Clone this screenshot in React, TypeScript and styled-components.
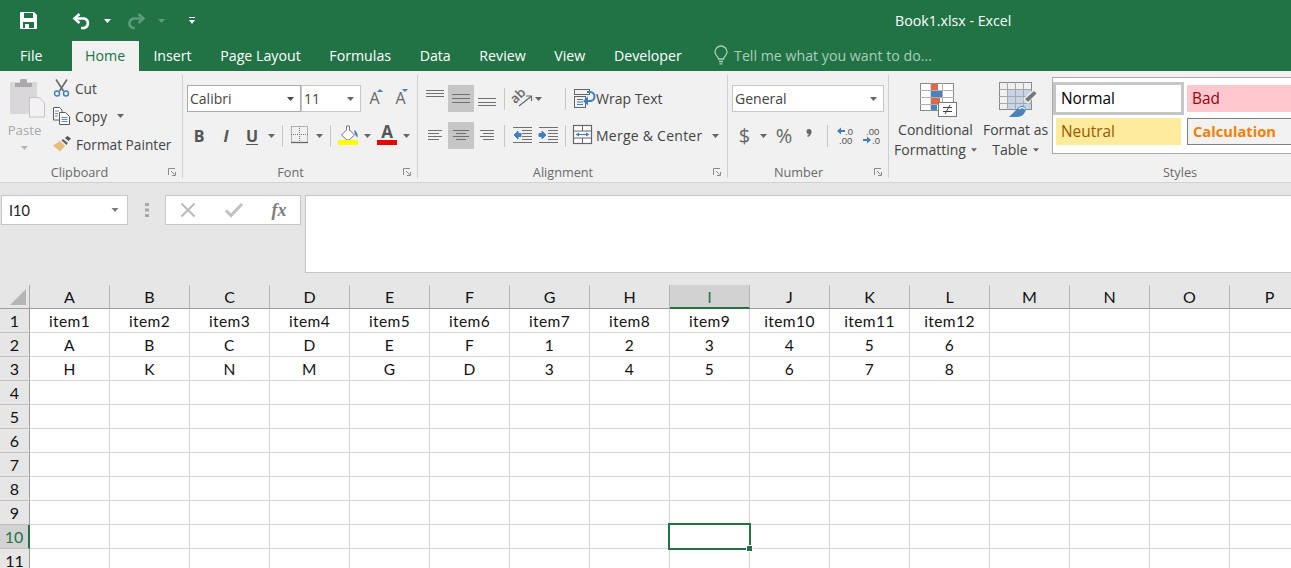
import React from 'react';
import styled, { createGlobalStyle } from 'styled-components';

const UI = `"Open Sans", "Noto Sans", "Liberation Sans", sans-serif`;
const SHEET = `Lato, "Noto Sans", "Liberation Sans", sans-serif`;
const GREEN = '#217346';
const BLUE = '#3f7fbf';

const Global = createGlobalStyle`
  html, body { margin: 0; padding: 0; background: #fff; }
  * { box-sizing: border-box; }
  svg { display: block; flex: none; overflow: visible; }
`;

const Page = styled.div`
  width: 1291px; height: 568px; overflow: hidden;
  font-family: ${UI}; display: flex; flex-direction: column;
`;
const TitleBar = styled.header`
  height: 41px; background: ${GREEN}; display: flex; align-items: center;
  padding-left: 20px; color: #fff;
`;
const QuickSlot = styled.span<{ $w: number }>`
  width: ${p => p.$w}px; display: flex; align-items: center;
`;
const DocTitle = styled.div`
  margin-left: 700px; font-size: 14.2px; white-space: nowrap;
`;
const TabBar = styled.nav`
  height: 30px; background: ${GREEN}; display: flex; padding-left: 5px;
`;
const Tab = styled.div<{ $active?: boolean }>`
  height: 30px; padding: ${p => (p.$active ? '0 14px 2px 13px' : '0 14.3px 2px')};
  display: flex; align-items: center; font-size: 14.2px; white-space: nowrap;
  color: ${p => (p.$active ? GREEN : '#fff')};
  background: ${p => (p.$active ? '#f1f1f1' : 'transparent')};
`;
const FileTab = styled(Tab)`
  padding: 0 0 2px 15px; width: 53px; margin-right: 14px;
`;
const TellMe = styled.div`
  margin-left: 18px; padding-bottom: 2px; display: flex; align-items: center; gap: 6px;
  color: #a9cdb9; font-size: 14.2px; white-space: nowrap;
`;
const Ribbon = styled.section`
  height: 112px; background: #f1f1f1; border-bottom: 1px solid #d2d2d2; display: flex;
`;
const Group = styled.div<{ $w: number; $last?: boolean }>`
  width: ${p => p.$w}px; flex: none; height: 111px; position: relative;
  display: flex; flex-direction: column; overflow: ${p => (p.$last ? 'hidden' : 'visible')};
  ${p => (p.$last ? '' : `
    &::after { content: ''; position: absolute; right: 0; top: 4px; height: 103px; width: 1px; background: #cfcfcf; }
  `)}
`;
const GroupBody = styled.div`
  height: 90px; flex: none; display: flex;
`;
const RowsBody = styled.div`
  height: 90px; flex: none; display: flex; flex-direction: column;
  padding-top: 14px; gap: 10px;
`;
const GroupLabel = styled.div<{ $pl?: number; $pr?: number }>`
  height: 21px; display: flex; align-items: center; justify-content: center;
  padding: 0 ${p => p.$pr ?? 20}px 0 ${p => p.$pl ?? 0}px;
  font-size: 12.7px; color: #6a6a6a; position: relative;
`;
const Launcher = styled.span`
  position: absolute; right: 7px; top: 7px;
`;
const ToolRow = styled.div<{ $pl?: number }>`
  height: 27px; display: flex; align-items: center; padding-left: ${p => p.$pl ?? 0}px;
`;
const Slot = styled.span<{ $w: number; $on?: boolean; $ml?: number }>`
  width: ${p => p.$w}px; height: 27px; flex: none; display: flex; align-items: center; justify-content: center;
  margin-left: ${p => p.$ml ?? 0}px; position: relative;
  background: ${p => (p.$on ? '#c6c6c6' : 'transparent')};
`;
const Divider = styled.span<{ $ml?: number; $mr?: number }>`
  width: 1px; height: 22px; background: #c6c6c6; flex: none;
  margin: 0 ${p => p.$mr ?? 0}px 0 ${p => p.$ml ?? 0}px;
`;
const PasteCol = styled.div`
  width: 48px; flex: none; display: flex; flex-direction: column; align-items: center; padding: 8px 0 0 1px;
  color: #a6a6a6; font-size: 13.2px;
`;
const PasteArt = styled.span`
  margin-left: 5px;
`;
const PasteText = styled.span`
  margin-top: 3px; line-height: 20px; margin-bottom: 6px;
`;
const ClipCol = styled.div`
  padding: 3px 0 0 5px; display: flex; flex-direction: column;
`;
const ClipRow = styled.div`
  height: 28px; display: flex; align-items: center; gap: 5px; font-size: 13.7px; color: #444; white-space: nowrap;
`;
const Select = styled.div<{ $w: number; $border?: string }>`
  width: ${p => p.$w}px; height: 27px; flex: none; background: #fff;
  border: 1px solid ${p => p.$border ?? '#ababab'}; display: flex; align-items: center; justify-content: space-between;
  padding: 0 6px 0 2px; font-size: 14px; color: #444;
`;
const GrowText = styled.span`
  font-size: 16px; color: #666; line-height: 27px;
`;
const GrowMark = styled.span<{ $left: number }>`
  position: absolute; top: 4px; left: ${p => p.$left}px;
`;
const LabelText = styled.span<{ $ml: number; $ls?: number }>`
  margin-left: ${p => p.$ml}px; font-size: 14px; color: #444; white-space: nowrap;
  letter-spacing: ${p => p.$ls ?? 0}px;
`;
const Big = styled.div<{ $w: number }>`
  width: ${p => p.$w}px; flex: none; display: flex; flex-direction: column; align-items: center;
  padding-top: 11px; font-size: 14px; line-height: 20px; color: #444; text-align: center; white-space: nowrap;
`;
const BigLines = styled.div`
  margin-top: 2px; display: flex; flex-direction: column; align-items: center;
`;
const BigLine = styled.span`
  display: flex; align-items: center; gap: 5px;
`;
const Gallery = styled.div`
  flex: 1; margin: 6px 0 0 3px; height: 77px; background: #fff; border: 1px solid #ababab; border-right: 0;
  display: grid; grid-template-columns: 125px 120px; grid-template-rows: 27px 27px;
  column-gap: 6px; row-gap: 6px; padding: 7px 0 0 3px;
`;
const StyleCell = styled.div<{ $bg: string; $fg: string; $bold?: boolean; $box?: boolean; $sel?: boolean }>`
  background: ${p => p.$bg}; color: ${p => p.$fg}; font-weight: ${p => (p.$bold ? 700 : 400)};
  font-size: ${p => (p.$bold ? 14.7 : 15.4)}px; padding: 0 0 ${p => (p.$box ? 2 : 0)}px 5px;
  border: ${p => (p.$box ? '1px solid #7f7f7f' : 'none')};
  display: flex; align-items: center;
  ${p => (p.$sel ? 'outline: 3px solid #c6c6c6;' : '')}
`;
const BoldB = styled.span`font-weight: 700; font-size: 16px; color: #555;`;
const ItalicI = styled.span`font-weight: 700; font-style: italic; font-size: 16px; color: #555;`;
const UnderU = styled.span`font-weight: 700; font-size: 16px; color: #555; text-decoration: underline; text-underline-offset: 2px;`;
const DollarText = styled.span`font-size: 20px; color: #666;`;
const PercentText = styled.span`font-size: 20px; color: #666;`;
const FormulaArea = styled.section`
  height: 102px; background: #e6e6e6; display: flex; align-items: flex-start;
  padding: 12px 0 0 1px;
`;
const NameBox = styled.div`
  width: 127px; height: 30px; background: #fff; border: 1px solid #c6c6c6;
  display: flex; align-items: center; justify-content: space-between; padding: 0 8px 0 7px;
  font-family: ${SHEET}; font-size: 14.5px; color: #222;
`;
const Grip = styled.span`
  width: 37px; height: 30px; display: flex; align-items: center; justify-content: center;
`;
const FormulaButtons = styled.div`
  width: 136px; height: 30px; background: #fff; border: 1px solid #c6c6c6; display: flex; align-items: center;
`;
const FxSlot = styled.span<{ $w: number }>`
  width: ${p => p.$w}px; display: flex; justify-content: center; align-items: center; flex: none;
`;
const Fx = styled.i`
  font-family: "Liberation Serif", serif; font-size: 18px; font-weight: 700; color: #7d7d7d; line-height: 20px;
`;
const FormulaInput = styled.div`
  flex: 1; height: 78px; margin-left: 4px; background: #fff; border: 1px solid #c6c6c6; border-right: 0;
`;
const SheetGrid = styled.section`
  flex: 1; overflow: hidden; display: grid; background: #fff;
  grid-template-columns: 30px repeat(16, 80px); grid-auto-rows: 24px;
  font-family: ${SHEET}; font-size: 15.5px; letter-spacing: 0.4px; color: #111;
`;
const Corner = styled.div`
  background: #e6e6e6; border-right: 1px solid #ababab; border-bottom: 1px solid #9e9e9e;
  display: flex; align-items: flex-end; justify-content: flex-end; padding: 0 3px 3px 0;
`;
const ColHead = styled.div<{ $sel?: boolean }>`
  background: ${p => (p.$sel ? '#d2d2d2' : '#e6e6e6')};
  border-right: 1px solid #b4b4b4;
  border-bottom: ${p => (p.$sel ? `2px solid ${GREEN}` : '1px solid #9e9e9e')};
  color: ${p => (p.$sel ? GREEN : '#111')};
  display: flex; align-items: center; justify-content: center; font-size: 16px; letter-spacing: 0;
`;
const RowHead = styled.div<{ $sel?: boolean }>`
  background: ${p => (p.$sel ? '#d2d2d2' : '#e6e6e6')};
  border-bottom: 1px solid #c2c2c2;
  border-right: ${p => (p.$sel ? `2px solid ${GREEN}` : '1px solid #9e9e9e')};
  color: ${p => (p.$sel ? GREEN : '#111')};
  display: flex; align-items: center; justify-content: center; font-size: 16px; letter-spacing: 0;
`;
const Cell = styled.div`
  border-right: 1px solid #d4d4d4; border-bottom: 1px solid #d4d4d4; position: relative;
  display: flex; align-items: center; justify-content: center;
`;
const CellCursor = styled.div`
  position: absolute; left: -2px; top: -2px; width: 83px; height: 27px; border: 2px solid ${GREEN}; z-index: 2;
  &::after {
    content: ''; position: absolute; right: -3px; bottom: -3px; width: 5px; height: 5px;
    background: ${GREEN}; outline: 1px solid #fff;
  }
`;

const Caret = ({ color = '#666', size = 7 }: { color?: string; size?: number }) => (
  <svg width={size} height={4} viewBox="0 0 7 4"><path d="M0 0h7L3.500 4z" fill={color} /></svg>
);
const SaveIcon = () => (
  <svg width="17" height="17" viewBox="0 0 17 17">
    <path fillRule="evenodd" fill="#fff" d="M0 1v15a1 1 0 0 0 1 1h15a1 1 0 0 0 1-1V3l-3-3H1a1 1 0 0 0-1 1zm4 0h9v5H4zM3 10h11v6H3z" />
    <rect x="5" y="12" width="4" height="4" fill="#fff" />
  </svg>
);
const UndoIcon = () => (
  <svg width="20" height="16" viewBox="0 0 20 16" fill="none" stroke="#fff" strokeWidth="2.600">
    <path d="M3 5.500h9.500a5 5 0 0 1 0 9.500H9" /><path d="M7.500 1 2.500 5.500l5 4.500" />
  </svg>
);
const RedoIcon = () => (
  <svg width="20" height="16" viewBox="0 0 20 16" fill="none" stroke="#5d9b79" strokeWidth="2.600">
    <path d="M17 5.500H7.500a5 5 0 0 0-1 9.500H9" /><path d="M12.500 1l5 4.500-5 4.500" />
  </svg>
);
const CustomizeIcon = () => (
  <svg width="6" height="7" viewBox="0 0 6 7"><path d="M0 0h6v1H0z M0 3h6L3 7z" fill="#fff" /></svg>
);
const Bulb = () => (
  <svg width="14" height="19" viewBox="0 0 14 19" fill="none" stroke="#a9cdb9" strokeWidth="1.300">
    <path d="M4.500 13c0-2.500-3.500-3.500-3.500-7a6 6 0 0 1 12 0c0 3.500-3.500 4.500-3.500 7z" /><path d="M5 15.500h4M5.500 17.800h3" />
  </svg>
);
const PasteIcon = () => (
  <svg width="35" height="38" viewBox="0 0 35 38">
    <rect y="3" width="27" height="32" rx="1" fill="#dad7da" />
    <path d="M5 4h5V1.500Q10 0 11.500 0h4Q17 0 17 1.500V4h5v4H5z" fill="#a9a9ab" />
    <path d="M19.500 18.500h9.500l5.500 5.500v14h-15z" fill="#f4f1f5" stroke="#c5c2c8" />
  </svg>
);
const ScissorsIcon = () => (
  <svg width="17" height="18" viewBox="0 0 17 18" fill="none">
    <path d="M3 0.500l7.500 11.500M14 0.500 6.500 12" stroke="#6d6d6d" strokeWidth="1.700" />
    <circle cx="4" cy="14.500" r="2.500" stroke={BLUE} strokeWidth="1.400" />
    <circle cx="13" cy="14.500" r="2.500" stroke={BLUE} strokeWidth="1.400" />
  </svg>
);
const CopyIcon = () => (
  <svg width="17" height="18" viewBox="0 0 17 18" fill="#fff" stroke="#5c5c5c">
    <path d="M.5.500h6l2.500 2.500v10H.5z" />
    <path d="M6.500 5.500h6l4 4v8h-10z" />
    <path d="M2 4h4M2 6.500h3M2 9h3M8.500 10.500h6M8.500 12.500h6M8.500 14.500h6" stroke="#4a82bd" strokeWidth="0.900" />
  </svg>
);
const BrushIcon = () => (
  <svg width="18" height="16" viewBox="0 0 18 16">
    <path d="M7 5 12 10 7 15.500 0 9.500z" fill="#e8bd7c" />
    <path d="M8.500 4.500 10 3l5 4-1.500 2z" fill="#666" />
    <path d="M12 2 14.500 0 18 2.500 15.500 5z" fill="#555" />
  </svg>
);
const LauncherIcon = () => (
  <svg width="8" height="8" viewBox="0 0 8 8" fill="none" stroke="#8a8a8a">
    <path d="M.5 7V.5H7" /><path d="M3 3l3.500 3.500M7.500 4v3.500H4" />
  </svg>
);
const GrowIcon = ({ up }: { up: boolean }) => (
  <svg width="6" height="3" viewBox="0 0 6 3"><path d={up ? 'M0 3 3 0l3 3z' : 'M0 0h6L3 3z'} fill={BLUE} /></svg>
);
const BorderIcon = () => (
  <svg width="17" height="19" viewBox="0 0 17 19" fill="none" stroke="#777" strokeDasharray="1 1">
    <path d="M.5.500h16v15M.5.500v15M8.500 0v16M0 8.500h17" />
    <path d="M0 16.500h17" strokeDasharray="none" strokeWidth="1.300" stroke="#666" />
  </svg>
);
const FillIcon = () => (
  <svg width="20" height="27" viewBox="0 0 20 27">
    <path d="M3.500 13 10 6.500 16.500 13 11 18H9z" fill="#fff" stroke="#777" />
    <path d="M8.500 8V4h3v5" fill="#fff" stroke="#777" />
    <path d="M16 8c2.500 1 4 4 3.500 7.500C17.500 14.500 16.500 11 16 8z" fill={BLUE} />
    <rect y="18" width="20" height="5" fill="#ffff00" />
  </svg>
);
const FontColorText = styled.text`font-family: ${UI}; font-size: 17px; font-weight: 700; fill: #555; text-anchor: middle;`;
const FontColorIcon = () => (
  <svg width="20" height="27" viewBox="0 0 20 27">
    <FontColorText x="10" y="16">A</FontColorText>
    <rect y="18" width="20" height="5" fill="#ee0000" />
  </svg>
);
const Lines = ({ rows }: { rows: [number, number, number][] }) => (
  <svg width="26" height="27" viewBox="0 0 26 27" stroke="#707070">
    {rows.map(([a, b, y], i) => <path key={i} d={`M${a} ${y + 0.5}H${b}`} />)}
  </svg>
);
const OrientText = styled.text`font-family: ${UI}; font-size: 13px; font-weight: 600; fill: #666; text-anchor: middle;`;
const OrientIcon = () => (
  <svg width="20" height="19" viewBox="0 0 20 19" fill="none" stroke="#666">
    <OrientText x="6" y="11" stroke="none" transform="rotate(-45 6 7)">ab</OrientText>
    <path d="M7 17 19 7.500" strokeWidth="1.200" /><path d="M14 7h5.500v5" strokeWidth="1.200" />
  </svg>
);
const WrapIcon = () => (
  <svg width="20" height="19" viewBox="0 0 20 19" fill="none">
    <rect x=".5" y=".5" width="15" height="5" stroke="#666" />
    <rect x=".5" y="7.500" width="11" height="11" stroke="#666" />
    <path d="M3 10.500h6M3 13h6M3 15.500h6" stroke={BLUE} />
    <path d="M13 3h3a3.500 3.500 0 0 1 0 9h-3" stroke={BLUE} strokeWidth="2" />
    <path d="M14 7.500l-5 4.500 5 4.500z" fill={BLUE} />
  </svg>
);
const MergeIcon = () => (
  <svg width="19" height="21" viewBox="0 0 19 21" fill="none">
    <rect x=".5" y=".5" width="18" height="18" stroke="#666" fill="#fff" strokeWidth="1.200" />
    <path d="M0 6h19M0 13h19M9.500 0v6M9.500 13v6" stroke="#666" />
    <path d="M4 9.500h11" stroke={BLUE} strokeWidth="1.200" />
    <path d="M6 7.500 2.500 9.500 6 11.500zM13 7.500l3.500 2L13 11.500z" fill={BLUE} />
  </svg>
);
const IndentIcon = ({ out }: { out: boolean }) => (
  <svg width="19" height="17" viewBox="0 0 19 17" stroke="#707070">
    <path d="M0 .5h19M9 3.500h10M9 6.500h10M9 9.500h10M9 12.500h10M0 15.500h19" />
    {out
      ? <path d="M8 6.500H5V4L1 8l4 4V9.500h3z" fill={BLUE} stroke={BLUE} />
      : <path d="M0 6.500h3V4l4 4-4 4V9.500H0z" fill={BLUE} stroke={BLUE} />}
  </svg>
);
const CommaIcon = () => (
  <svg width="6" height="13" viewBox="0 0 6 13">
    <path d="M3 0a2.500 2.500 0 0 1 2.500 3q0 3-3.500 5L1 7q1.500-1 2-2A2.500 2.500 0 0 1 3 0z" fill="#666" />
  </svg>
);
const DecimalText = styled.text`font-family: "Liberation Sans", sans-serif; font-size: 9.500px; fill: #555;`;
const DecIcon = ({ inc }: { inc: boolean }) => (
  <svg width="16" height="18" viewBox="0 0 16 18">
    {inc ? (
      <>
        <path d="M8 3H4V.5L0 4l4 3.500V5h4z" fill={BLUE} />
        <DecimalText x="8" y="8">.0</DecimalText>
        <DecimalText x="2" y="17">.00</DecimalText>
      </>
    ) : (
      <>
        <DecimalText x="3" y="8">.00</DecimalText>
        <path d="M0 12h4V9.500L8 13l-4 3.500V14H0z" fill={BLUE} />
        <DecimalText x="9" y="17">.0</DecimalText>
      </>
    )}
  </svg>
);
const CondIcon = () => (
  <svg width="43" height="36" viewBox="-6 -1 43 36" fill="none">
    <rect x=".5" y=".5" width="33" height="27" fill="#fff" stroke="#8a8a8a" />
    <path d="M0 7.500h34M0 14.500h34M0 21.500h34M11 0v28M22.500 0v28" stroke="#b0b0b0" />
    <rect x="11" y="1" width="7" height="6" fill="#dd6a47" />
    <rect x="11" y="8" width="11" height="6" fill="#4a82bd" />
    <rect x="11" y="15" width="9" height="6" fill="#dd6a47" />
    <rect x="11" y="22" width="6" height="5" fill="#4a82bd" />
    <rect x="18.500" y="19.500" width="18" height="14" fill="#fff" stroke="#777" />
    <path d="M23 24.500h9M23 28.500h9M30 22l-5 9" stroke="#444" />
  </svg>
);
const TableIcon = () => (
  <svg width="43" height="36" viewBox="-5 0 43 36" fill="none">
    <rect x="9" y="8" width="24" height="20" fill="#c5d5e9" />
    <rect x=".5" y=".5" width="32" height="27" stroke="#8a8a8a" />
    <path d="M0 7.500h33M0 14.500h33M0 21.500h33M8.500 0v28M16.500 0v28M24.500 0v28" stroke="#a8a8a8" />
    <path d="M24 17 34 8 38 11 29 22z" fill="#f1f1f1" />
    <path d="M26 17 35 9 37.500 11.500 29 20z" fill="#777" />
    <path d="M10 35 19 26Q23 22 26 25 28 29 24 33 21 35 18 35z" fill="#4a82bd" />
    <path d="M20 27Q23 24 26 27" stroke="#fff" strokeWidth="1.300" />
  </svg>
);
const X = () => (
  <svg width="16" height="16" viewBox="0 0 16 16" stroke="#bdbdbd" strokeWidth="2.200"><path d="M1.500 1.500l13 13M14.500 1.500l-13 13" /></svg>
);
const Check = () => (
  <svg width="18" height="14" viewBox="0 0 18 14" fill="none" stroke="#c2c2c2" strokeWidth="3"><path d="M1 7.500l5 5L17 1" /></svg>
);
const GripIcon = () => (
  <svg width="4" height="14" viewBox="0 0 4 14" fill="#a8a8a8"><rect width="4" height="3" /><rect y="5.500" width="4" height="3" /><rect y="11" width="4" height="3" /></svg>
);
const CornerIcon = () => (
  <svg width="16" height="16" viewBox="0 0 16 16"><path d="M16 0v16H0z" fill="#b6b6b6" /></svg>
);

const columns = 'ABCDEFGHIJKLMNOP'.split('');
const data: string[][] = [
  ['item1', 'item2', 'item3', 'item4', 'item5', 'item6', 'item7', 'item8', 'item9', 'item10', 'item11', 'item12'],
  ['A', 'B', 'C', 'D', 'E', 'F', '1', '2', '3', '4', '5', '6'],
  ['H', 'K', 'N', 'M', 'G', 'D', '3', '4', '5', '6', '7', '8'],
];
const tabs = ['Insert', 'Page Layout', 'Formulas', 'Data', 'Review', 'View', 'Developer'];

export default function App() {
  return (
    <Page>
      <Global />
      <TitleBar>
        <QuickSlot $w={52}><SaveIcon /></QuickSlot>
        <QuickSlot $w={32}><UndoIcon /></QuickSlot>
        <QuickSlot $w={22}><Caret color="#fff" /></QuickSlot>
        <QuickSlot $w={32}><RedoIcon /></QuickSlot>
        <QuickSlot $w={31}><Caret color="#5d9b79" /></QuickSlot>
        <QuickSlot $w={6}><CustomizeIcon /></QuickSlot>
        <DocTitle>Book1.xlsx - Excel</DocTitle>
      </TitleBar>
      <TabBar>
        <FileTab>File</FileTab>
        <Tab $active>Home</Tab>
        {tabs.map(t => <Tab key={t}>{t}</Tab>)}
        <TellMe><Bulb />Tell me what you want to do...</TellMe>
      </TabBar>
      <Ribbon>
        <Group $w={183}>
          <GroupBody>
            <PasteCol>
              <PasteArt><PasteIcon /></PasteArt>
              <PasteText>Paste</PasteText>
              <Caret color="#b5b5b5" />
            </PasteCol>
            <ClipCol>
              <ClipRow><ScissorsIcon />Cut</ClipRow>
              <ClipRow><CopyIcon />Copy<Slot $w={16}><Caret /></Slot></ClipRow>
              <ClipRow><BrushIcon />Format Painter</ClipRow>
            </ClipCol>
          </GroupBody>
          <GroupLabel $pr={24}>Clipboard<Launcher><LauncherIcon /></Launcher></GroupLabel>
        </Group>
        <Group $w={235}>
          <RowsBody>
            <ToolRow $pl={4}>
              <Select $w={114}>Calibri<Caret color="#444" /></Select>
              <Select $w={60} $border="#c6c6c6">11<Caret /></Select>
              <Slot $w={27}><GrowText>A</GrowText><GrowMark $left={16}><GrowIcon up /></GrowMark></Slot>
              <Slot $w={25}><GrowText>A</GrowText><GrowMark $left={14}><GrowIcon up={false} /></GrowMark></Slot>
            </ToolRow>
            <ToolRow $pl={4}>
              <Slot $w={24}><BoldB>B</BoldB></Slot>
              <Slot $w={30}><ItalicI>I</ItalicI></Slot>
              <Slot $w={22}><UnderU>U</UnderU></Slot>
              <Slot $w={16}><Caret /></Slot>
              <Divider $ml={3} />
              <Slot $w={32}><BorderIcon /></Slot>
              <Slot $w={8}><Caret /></Slot>
              <Divider $ml={7} />
              <Slot $w={34}><FillIcon /></Slot>
              <Slot $w={4}><Caret /></Slot>
              <Slot $w={36}><FontColorIcon /></Slot>
              <Slot $w={2}><Caret /></Slot>
            </ToolRow>
          </RowsBody>
          <GroupLabel>Font<Launcher><LauncherIcon /></Launcher></GroupLabel>
        </Group>
        <Group $w={310}>
          <RowsBody>
            <ToolRow $pl={4}>
              <Slot $w={26}><Lines rows={[[4, 22, 5], [4, 22, 8], [4, 22, 11]]} /></Slot>
              <Slot $w={26} $on><Lines rows={[[4, 22, 9], [4, 22, 13], [4, 22, 17]]} /></Slot>
              <Slot $w={26}><Lines rows={[[4, 22, 13], [4, 22, 17], [4, 22, 20]]} /></Slot>
              <Divider $ml={4} $mr={7} />
              <Slot $w={20}><OrientIcon /></Slot>
              <Slot $w={12}><Caret /></Slot>
              <Divider $ml={21} $mr={7} />
              <Slot $w={21}><WrapIcon /></Slot>
              <LabelText $ml={2}>Wrap Text</LabelText>
            </ToolRow>
            <ToolRow $pl={4}>
              <Slot $w={26}><Lines rows={[[6, 20, 8], [6, 17, 11], [6, 20, 14], [6, 17, 17]]} /></Slot>
              <Slot $w={26} $on><Lines rows={[[5, 21, 8], [8, 18, 11], [5, 21, 14], [8, 18, 17]]} /></Slot>
              <Slot $w={26}><Lines rows={[[6, 20, 8], [9, 20, 11], [6, 20, 14], [9, 20, 17]]} /></Slot>
              <Divider $ml={4} $mr={8} />
              <Slot $w={19}><IndentIcon out /></Slot>
              <Slot $w={19} $ml={7}><IndentIcon out={false} /></Slot>
              <Divider $ml={7} $mr={7} />
              <Slot $w={19}><MergeIcon /></Slot>
              <LabelText $ml={4} $ls={0.25}>Merge &amp; Center</LabelText>
              <Slot $w={26}><Caret /></Slot>
            </ToolRow>
          </RowsBody>
          <GroupLabel>Alignment<Launcher><LauncherIcon /></Launcher></GroupLabel>
        </Group>
        <Group $w={161}>
          <RowsBody>
            <ToolRow $pl={4}>
              <Select $w={152} $border="#c6c6c6">General<Caret /></Select>
            </ToolRow>
            <ToolRow $pl={7}>
              <Slot $w={19}><DollarText>$</DollarText></Slot>
              <Slot $w={19}><Caret /></Slot>
              <Slot $w={22}><PercentText>%</PercentText></Slot>
              <Slot $w={28}><CommaIcon /></Slot>
              <Divider $ml={4} />
              <Slot $w={16} $ml={9}><DecIcon inc /></Slot>
              <Slot $w={16} $ml={10}><DecIcon inc={false} /></Slot>
            </ToolRow>
          </RowsBody>
          <GroupLabel>Number<Launcher><LauncherIcon /></Launcher></GroupLabel>
        </Group>
        <Group $w={402} $last>
          <GroupBody>
            <Big $w={93}>
              <CondIcon />
              <BigLines><span>Conditional</span><BigLine>Formatting<Caret size={6} /></BigLine></BigLines>
            </Big>
            <Big $w={67}>
              <TableIcon />
              <BigLines><span>Format as</span><BigLine>Table<Caret size={6} /></BigLine></BigLines>
            </Big>
            <Gallery>
              <StyleCell $bg="#fff" $fg="#000" $sel>Normal</StyleCell>
              <StyleCell $bg="#ffc7ce" $fg="#9c0006">Bad</StyleCell>
              <StyleCell $bg="#ffeb9c" $fg="#9c5700">Neutral</StyleCell>
              <StyleCell $bg="#f2f2f2" $fg="#fa7d00" $bold $box>Calculation</StyleCell>
            </Gallery>
          </GroupBody>
          <GroupLabel $pl={180} $pr={0}>Styles</GroupLabel>
        </Group>
      </Ribbon>
      <FormulaArea>
        <NameBox>I10<Caret color="#7a7a7a" size={8} /></NameBox>
        <Grip><GripIcon /></Grip>
        <FormulaButtons>
          <FxSlot $w={44}><X /></FxSlot>
          <FxSlot $w={47}><Check /></FxSlot>
          <FxSlot $w={44}><Fx>fx</Fx></FxSlot>
        </FormulaButtons>
        <FormulaInput />
      </FormulaArea>
      <SheetGrid>
        <Corner><CornerIcon /></Corner>
        {columns.map(c => <ColHead key={c} $sel={c === 'I'}>{c}</ColHead>)}
        {Array.from({ length: 11 }, (_, r) => (
          <React.Fragment key={r}>
            <RowHead $sel={r === 9}>{r + 1}</RowHead>
            {columns.map((c, i) => (
              <Cell key={c}>
                {data[r]?.[i] ?? ''}
                {r === 9 && c === 'I' ? <CellCursor /> : null}
              </Cell>
            ))}
          </React.Fragment>
        ))}
      </SheetGrid>
    </Page>
  );
}
